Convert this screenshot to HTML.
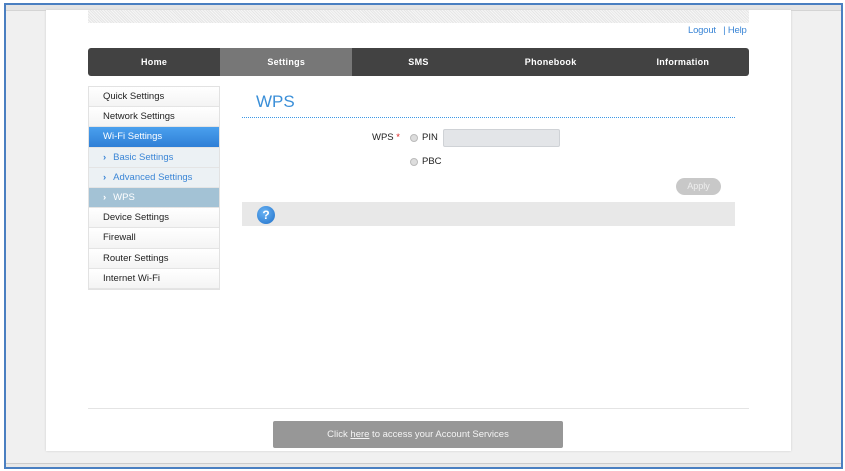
<!DOCTYPE html>
<html><head><style>
*{margin:0;padding:0;box-sizing:border-box}
body{width:845px;height:471px;background:#fff;position:relative;overflow:hidden;font-family:"Liberation Sans",sans-serif;font-size:10px;color:#222}
.frame{position:absolute;left:4px;top:3px;width:839px;height:466px;border:2px solid #4a7fc1;background:#f0f0f0}
.topstrip{position:absolute;left:0;top:0;right:0;height:6px;background:#e4e4e4;border-bottom:1px solid #d4d4d4}
.bot{position:absolute;left:0;right:0;bottom:0;height:4px;background:#e8e8e8;border-top:1px solid #ccc}
.page{position:absolute;left:46px;top:10px;width:745px;height:441px;background:#fff;box-shadow:0 0 2px #ccc}
.pat{position:absolute;left:88px;top:10px;width:661px;height:13px;background:repeating-linear-gradient(45deg,#e6e6e6 0 1px,#f6f6f6 1px 2px)}
.links{position:absolute;top:25px;left:688px;color:#3b86d6;font-size:9.5px;letter-spacing:-0.2px}
.nav{position:absolute;left:88px;top:48px;width:661px;height:28px;background:#424242;border-radius:3px;display:flex}
.nav div{width:132.2px;color:#fff;font-weight:bold;font-size:9px;text-align:center;line-height:28px;letter-spacing:.3px}
.nav .act{background:#777}
.side{position:absolute;left:88px;top:86px;width:132px;border:1px solid #e2e2e2}
.side div{height:20.2px;line-height:20px;padding-left:14px;border-bottom:1px solid #e4e4e4;background:linear-gradient(#fff,#f4f4f4);font-size:9.5px;color:#222}
.side .wifi{background:linear-gradient(#4aa0ee,#2f7fd6);color:#fff}
.side .sub{background:#ecf1f4;color:#3b86d6}
.side .sub:before,.side .cur:before{content:"›";font-weight:bold;margin-right:7px}
.side .cur{background:#a3c2d5;color:#fff}
h1{position:absolute;left:256px;top:92px;font-weight:normal;font-size:17px;color:#3b8fd8}
.dot{position:absolute;left:242px;top:117px;width:493px;border-top:1.5px dotted #3d98e6}
.radio{position:absolute;width:8px;height:8px;border-radius:50%;background:#ddd;border:1px solid #bbb}
.t{position:absolute;font-size:9.5px}
.inp{position:absolute;left:443px;top:129px;width:117px;height:18px;background:#e3e5e8;border:1px solid #cfd2d6;border-radius:2px}
.apply{position:absolute;left:676px;top:178px;width:45px;height:17px;border-radius:9px;background:#c8c8c8;color:#eee;text-align:center;line-height:17px;font-size:9px}
.help{position:absolute;left:242px;top:202px;width:493px;height:24px;background:#e8e8e8}
.q{position:absolute;left:257px;top:206px;width:18px;height:18px;border-radius:50%;background:radial-gradient(circle at 40% 35%,#6ab4f5,#1f6fc8);color:#fff;font-weight:bold;font-size:12px;text-align:center;line-height:18px}
.fl{position:absolute;left:88px;top:408px;width:661px;border-top:1px solid #e4e4e4}
.acct{position:absolute;left:273px;top:421px;width:290px;height:27px;background:#979797;border-radius:2px;color:#f4f4f4;text-align:center;line-height:27px;font-size:9.5px}
</style></head><body>
<div class="frame"><div class="topstrip"></div><div class="bot"></div></div>
<div class="page"></div>
<div class="pat"></div>
<div class="links">Logout&nbsp;&nbsp;&nbsp;| Help</div>
<div class="nav"><div>Home</div><div class="act">Settings</div><div>SMS</div><div>Phonebook</div><div>Information</div></div>
<div class="side">
<div>Quick Settings</div><div>Network Settings</div><div class="wifi">Wi-Fi Settings</div>
<div class="sub">Basic Settings</div><div class="sub">Advanced Settings</div><div class="cur">WPS</div>
<div>Device Settings</div><div>Firewall</div><div>Router Settings</div><div>Internet Wi-Fi</div></div>
<h1>WPS</h1><div class="dot"></div>
<div class="t" style="left:372px;top:132px">WPS <span style="color:#d22">*</span></div>
<div class="radio" style="left:410px;top:134px"></div><div class="t" style="left:422px;top:132px">PIN</div>
<div class="inp"></div>
<div class="radio" style="left:410px;top:158px"></div><div class="t" style="left:422px;top:156px">PBC</div>
<div class="apply">Apply</div>
<div class="help"></div><div class="q">?</div>
<div class="fl"></div>
<div class="acct">Click <u>here</u> to access your Account Services</div>
</body></html>
